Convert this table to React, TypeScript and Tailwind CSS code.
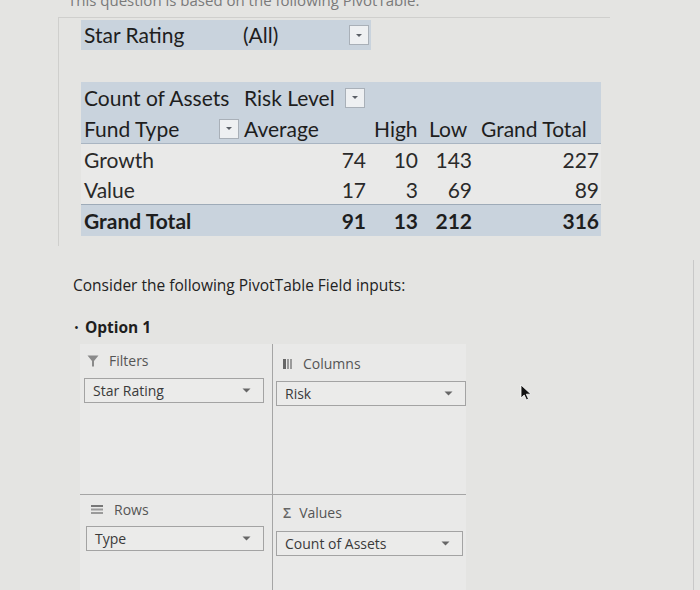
import React from 'react';

const sheetFont = { fontFamily: 'Lato, "Liberation Sans", sans-serif' };
const uiFont = { fontFamily: '"Open Sans", "Noto Sans", sans-serif' };

function DropButton({ className = '' }: { className?: string }) {
  return (
    <div
      className={`flex h-[20px] w-[20px] items-center justify-center border border-[#a9b0b8] bg-[#eef0f2] ${className}`}
    >
      <svg width="8" height="5" viewBox="0 0 8 5">
        <path d="M1 1h6L4 4z" fill="#5a5f66" />
      </svg>
    </div>
  );
}

function FieldBox({ label, className = '' }: { label: string; className?: string }) {
  return (
    <div
      className={`flex h-[25px] items-center justify-between border border-[#a3a3a3] bg-[#ebebea] pl-[8px] pr-[12px] text-[14px] text-[#3a3a3a] ${className}`}
    >
      <span>{label}</span>
      <svg width="9" height="5" viewBox="0 0 9 5">
        <path d="M0.5 0.5h8L4.5 4.5z" fill="#666" />
      </svg>
    </div>
  );
}

function FilterIcon() {
  return (
    <svg width="12" height="12" viewBox="0 0 12 12">
      <path d="M0.5 0.5h11L7 6v5.5H5V6z" fill="#8a8a8a" />
    </svg>
  );
}

function ColumnsIcon() {
  return (
    <svg width="11" height="10" viewBox="0 0 11 10">
      <rect x="0" y="0" width="3" height="10" fill="#666" />
      <rect x="4" y="0" width="2" height="10" fill="#9a9a9a" />
      <rect x="7" y="0" width="2" height="10" fill="#9a9a9a" />
    </svg>
  );
}

function RowsIcon() {
  return (
    <svg width="12" height="9" viewBox="0 0 12 9">
      <rect x="0" y="0" width="12" height="2" fill="#777" />
      <rect x="0" y="3.5" width="12" height="2" fill="#9a9a9a" />
      <rect x="0" y="7" width="12" height="2" fill="#9a9a9a" />
    </svg>
  );
}

const rows = [
  { name: 'Growth', avg: '74', high: '10', low: '143', total: '227' },
  { name: 'Value', avg: '17', high: '3', low: '69', total: '89' },
];

export default function App() {
  return (
    <div className="relative h-[590px] w-[700px] overflow-hidden bg-[#e4e4e2]">
      {/* cut-off question line */}
      <div className="ml-[68px] mt-[-8px] h-[12px] text-[15px] leading-[16px] text-[#7a7a7a]" style={uiFont}>
        This question is based on the following PivotTable:
      </div>

      {/* spreadsheet area */}
      <div className="ml-[58px] mt-[13px] w-[552px] border-l border-t border-[#cfcfcd] pb-[10px]" style={sheetFont}>
        <div className="ml-[22px] mt-[2px] flex h-[30px] w-[290px] items-center bg-[#c9d3dd] text-[21px] text-[#1e1e1e]">
          <span className="w-[162px] pl-[3px]">Star Rating</span>
          <span className="flex-1">(All)</span>
          <DropButton className="mr-[2px]" />
        </div>

        <div className="ml-[22px] mt-[32px] w-[520px] text-[21px] text-[#1e1e1e]">
          <div className="flex h-[31px] items-center bg-[#c9d3dd]">
            <span className="w-[160px] pl-[3px]">Count of Assets</span>
            <span className="pl-[3px] pr-[10px]">Risk Level</span>
            <DropButton />
          </div>
          <div className="grid h-[31px] grid-cols-[160px_128px_52px_54px_126px] items-center border-b border-[#a9b5c2] bg-[#c9d3dd]">
            <div className="flex items-center justify-between pl-[3px] pr-[2px]">
              <span>Fund Type</span>
              <DropButton className="h-[18px] w-[18px]" />
            </div>
            <span className="pl-[3px]">Average</span>
            <span className="pl-[5px]">High</span>
            <span className="pl-[8px]">Low</span>
            <span className="pl-[6px]">Grand Total</span>
          </div>
          {rows.map((r) => (
            <div
              key={r.name}
              className="grid h-[30px] grid-cols-[160px_128px_52px_54px_126px] items-center bg-[#e9e9e8] text-[#2a2a2a]"
            >
              <span className="pl-[3px]">{r.name}</span>
              <span className="pr-[3px] text-right">{r.avg}</span>
              <span className="pr-[3px] text-right">{r.high}</span>
              <span className="pr-[3px] text-right">{r.low}</span>
              <span className="pr-[2px] text-right">{r.total}</span>
            </div>
          ))}
          <div className="grid h-[32px] grid-cols-[160px_128px_52px_54px_126px] items-center border-t border-[#9eabb8] bg-[#c9d3dd] font-bold">
            <span className="pl-[3px]">Grand Total</span>
            <span className="pr-[3px] text-right">91</span>
            <span className="pr-[3px] text-right">13</span>
            <span className="pr-[3px] text-right">212</span>
            <span className="pr-[2px] text-right">316</span>
          </div>
        </div>
      </div>

      {/* question text */}
      <div style={uiFont}>
        <p className="ml-[73px] mt-[28px] text-[15.5px] text-[#222]">Consider the following PivotTable Field inputs:</p>
        <div className="ml-[74px] mt-[19px] flex items-center gap-[6px] text-[15.5px] font-bold text-[#1e1e1e]">
          <span className="text-[13px] font-normal">•</span>
          <span>Option 1</span>
        </div>

        {/* field list panel */}
        <div className="ml-[80px] mt-[4px] grid h-[250px] w-[386px] grid-cols-2 grid-rows-[150px_100px] bg-[#e9e9e8] text-[#555]">
          <div className="border-r border-[#a5a5a5] pl-[4px] pr-[8px] pt-[8px]">
            <div className="flex h-[18px] items-center gap-[10px] pl-[3px] text-[14px]">
              <FilterIcon />
              <span>Filters</span>
            </div>
            <FieldBox label="Star Rating" className="mt-[8px]" />
          </div>
          <div className="pl-[3px] pt-[11px]">
            <div className="flex h-[18px] items-center gap-[9px] pl-[7px] text-[14px]">
              <ColumnsIcon />
              <span>Columns</span>
            </div>
            <FieldBox label="Risk" className="mt-[8px]" />
          </div>
          <div className="border-r border-t border-[#a5a5a5] pl-[6px] pr-[8px] pt-[6px]">
            <div className="flex h-[18px] items-center gap-[11px] pl-[5px] text-[14px]">
              <RowsIcon />
              <span>Rows</span>
            </div>
            <FieldBox label="Type" className="mt-[7px]" />
          </div>
          <div className="border-t border-[#a5a5a5] pl-[3px] pr-[3px] pt-[9px]">
            <div className="flex h-[18px] items-center gap-[8px] pl-[7px] text-[14px]">
              <span className="text-[14px] font-semibold text-[#666]">Σ</span>
              <span>Values</span>
            </div>
            <FieldBox label="Count of Assets" className="mt-[9px]" />
          </div>
        </div>
      </div>

      {/* mouse pointer */}
      <svg className="absolute left-[520px] top-[384px]" width="14" height="18" viewBox="0 0 14 18">
        <path d="M1 1v13l3.2-3 2.3 5 2-1-2.2-4.8H11z" fill="#111" stroke="#fff" strokeWidth="0.8" />
      </svg>

      {/* screen edge */}
      <div className="absolute right-[6px] top-[260px] h-[330px] w-px bg-[#c8c8c8]" />
    </div>
  );
}
